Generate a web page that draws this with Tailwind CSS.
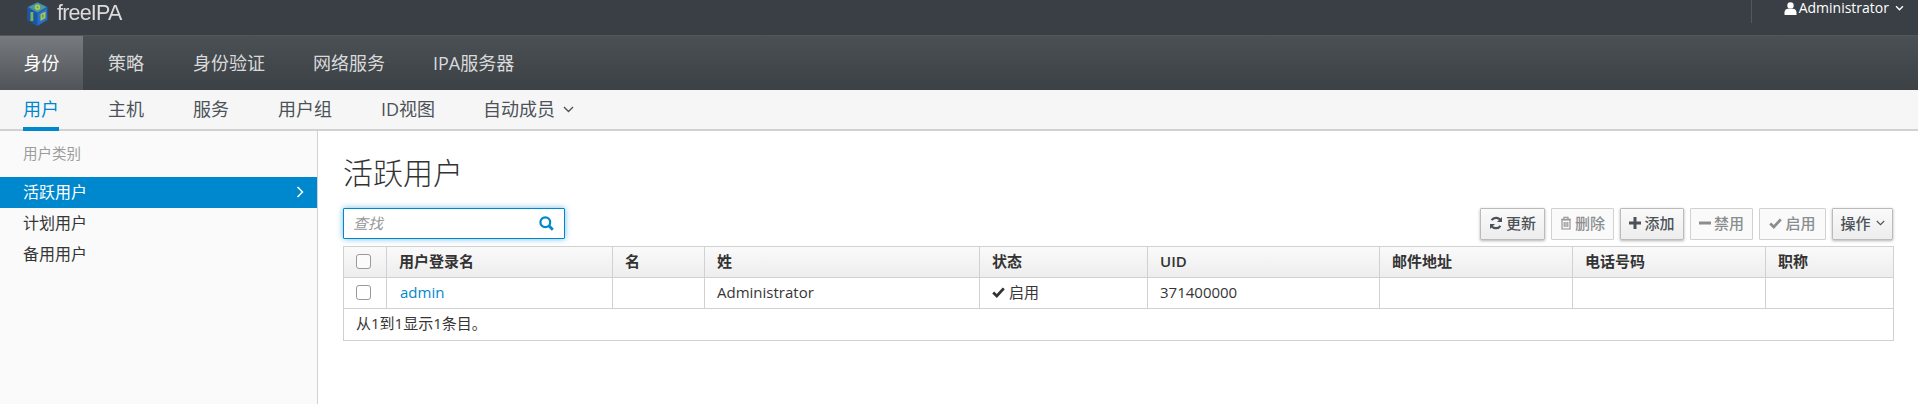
<!doctype html>
<html lang="zh"><head><meta charset="utf-8"><title>freeIPA</title>
<script src="https://cdn.jsdelivr.net/npm/@tailwindcss/browser@4"></script></head>
<body class="m-0 h-[404px] w-[1918px] overflow-hidden bg-white font-['Open_Sans','Noto_Sans_CJK_SC',sans-serif] text-[15px] text-[#363636]">
<header class="flex h-9 items-start justify-between bg-[#393f44] border-b border-[#52575b]">
  <div class="flex items-center pl-[27px] pt-[2px]">
    <svg class="blur-[0.4px]" width="21" height="24" viewBox="0 0 21 24"><polygon points="10.5,0 20.5,5 20.5,18 10.5,24 0.5,18 0.5,5" fill="#1f62b8"/><polygon points="10.5,0.500 19.500,5 10.500,10.500 1.500,5" fill="#4f9a96"/><circle cx="10.5" cy="5.200" r="2.700" fill="#b2cc4e"/><circle cx="10.500" cy="5.200" r="1" fill="#4f9a96"/><polygon points="1,6.500 10,11.500 10,23 1,18" fill="#1a56a6"/><polygon points="11,11.500 20,6.500 20,18 11,23" fill="#2a70c8"/><rect x="3.500" y="10" width="2.800" height="9" fill="#7fb356"/><polygon points="13.500,12 18.500,9.500 18.500,16 13.500,19" fill="#a8c64e"/><rect x="15" y="12.500" width="1.500" height="3" fill="#5f9a4a"/></svg>
    <span class="ml-[9px] -mt-[2px] font-['Liberation_Sans',sans-serif] text-[21.5px] leading-[24px] tracking-[-0.8px] text-[#dcdcdc] blur-[0.4px]">freeIPA</span>
  </div>
  <div class="flex h-[23px] items-start">
    <div class="h-[23px] w-px bg-[#53585c]"></div>
    <div class="ml-[32px] mr-[14px] flex items-center gap-[2px] text-[14px] leading-[16px] text-white">
      <svg width="13" height="13" viewBox="0 0 13 13" fill="#fff"><circle cx="6.500" cy="3.400" r="3.200"/><path d="M0.500 13v-2.600c0-2.200 1.600-3.700 3.400-3.700h5.200c1.800 0 3.400 1.500 3.400 3.700V13z"/></svg>
      <span>Administrator</span>
      <svg class="ml-[4px]" width="9" height="6" viewBox="0 0 10 7" fill="none" stroke="#fff" stroke-width="1.6"><path d="M1 1.500l4 4 4-4"/></svg>
    </div>
  </div>
</header>
<nav class="flex h-[54px] items-stretch bg-gradient-to-b from-[#4b5054] to-[#3c4145] text-[18px] text-[#d9dadb]">
  <a class="flex w-[83px] items-center justify-center bg-gradient-to-b from-[#777b80] to-[#505459] text-white">身份</a>
  <a class="ml-[25px] flex items-center">策略</a>
  <a class="ml-[49px] flex items-center">身份验证</a>
  <a class="ml-[48px] flex items-center">网络服务</a>
  <a class="ml-[48px] flex items-center">IPA服务器</a>
</nav>
<nav class="flex h-[41px] items-stretch border-b-2 border-[#d1d1d1] bg-[#f6f6f6] pl-[23px] text-[18px] text-[#4d5258]">
  <a class="-mb-[2px] flex items-center border-b-[4px] border-[#0088ce] pt-[2px] text-[#0088ce]">用户</a>
  <a class="ml-[49px] flex items-center">主机</a>
  <a class="ml-[49px] flex items-center">服务</a>
  <a class="ml-[49px] flex items-center">用户组</a>
  <a class="ml-[49px] flex items-center">ID视图</a>
  <a class="ml-[48px] flex items-center gap-2">自动成员
    <svg width="11" height="7" viewBox="0 0 11 7" fill="none" stroke="#4d5258" stroke-width="1.4"><path d="M1 1l4.500 4.500L10 1"/></svg></a>
</nav>
<div class="flex h-[273px]">
  <aside class="w-[318px] shrink-0 border-r border-[#d1d1d1] bg-[#fafafa]">
    <div class="h-[46px] pl-[23px] pt-[11px] text-[14.5px] leading-[24px] text-[#9c9c9c]">用户类别</div>
    <div class="flex h-[31px] items-center justify-between bg-[#0088ce] pb-[1px] pl-[23px] pr-[13px] text-[16px] text-white">活跃用户
      <svg width="8" height="12" viewBox="0 0 8 12" fill="none" stroke="#fff" stroke-width="1.5"><path d="M1.500 1l5 5-5 5"/></svg></div>
    <div class="flex h-[31px] items-center pb-[2px] pl-[23px] text-[16px]">计划用户</div>
    <div class="flex h-[31px] items-center pb-[2px] pl-[23px] text-[16px]">备用用户</div>
  </aside>
  <main class="w-[1600px] pl-[25px] pr-[25px]">
    <h1 class="h-[77px] pt-[18px] text-[30px] font-light leading-[48px] text-[#333]">活跃用户</h1>
    <div class="flex h-[38px] items-start justify-between">
      <div class="flex h-[31px] w-[222px] items-center justify-between rounded-[1px] border border-[#0088ce] bg-white pl-[9px] pr-[10px] shadow-[0_0_6px_rgba(0,136,206,0.55)]">
        <span class="text-[15px] italic text-[#999]">查找</span>
        <svg width="15" height="15" viewBox="0 0 15 15" fill="none" stroke="#0088ce" stroke-width="2.2"><circle cx="6.300" cy="6.300" r="4.900"/><path d="M9.800 9.800l4 4" stroke-width="2.800"/></svg>
      </div>
      <div class="flex gap-[6px] text-[15px] leading-[20px]">
        <button class="flex h-8 w-[65px] items-center justify-center gap-[3px] rounded-[1px] border border-[#bbb] bg-gradient-to-b from-[#fafafa] to-[#ededed] pb-[2px] font-medium text-[#4d5258] shadow-[0_1px_3px_rgba(0,0,0,0.3)]">
          <svg width="14" height="14" viewBox="0 0 14 14" fill="none" stroke="#4d5258" stroke-width="2.200"><path d="M12 5.200A5.300 5.300 0 0 0 2.600 4.200"/><path d="M2 8.800a5.300 5.300 0 0 0 9.400 1"/><path d="M13 1v5H8z" fill="#4d5258" stroke="none"/><path d="M1 13V8h5z" fill="#4d5258" stroke="none"/></svg>更新</button>
        <button class="flex h-8 w-[63px] items-center justify-center gap-[3px] rounded-[1px] border border-[#d1d1d1] bg-[#fafafa] pb-[2px] font-medium text-[#8b8d8f]">
          <svg width="12" height="14" viewBox="0 0 12 14" fill="none" stroke="#8b8d8f" stroke-width="1.100"><path d="M2 4h8v9H2z"/><path d="M1 3.200h10M4 3V1.200h4V3M4.200 6v5M6 6v5M7.800 6v5"/></svg>删除</button>
        <button class="flex h-8 w-[64px] items-center justify-center gap-[3px] rounded-[1px] border border-[#bbb] bg-gradient-to-b from-[#fafafa] to-[#ededed] pb-[2px] font-medium text-[#4d5258] shadow-[0_1px_3px_rgba(0,0,0,0.3)]">
          <svg width="12" height="12" viewBox="0 0 12 12" fill="#4d5258"><path d="M4.500 0h3v4.500H12v3H7.500V12h-3V7.500H0v-3h4.500z"/></svg>添加</button>
        <button class="flex h-8 w-[63px] items-center justify-center gap-[3px] rounded-[1px] border border-[#d1d1d1] bg-[#fafafa] pb-[2px] font-medium text-[#8b8d8f]">
          <svg width="12" height="12" viewBox="0 0 12 12" fill="#8b8d8f"><path d="M0 4.500h12v3H0z"/></svg>禁用</button>
        <button class="flex h-8 w-[67px] items-center justify-center gap-[3px] rounded-[1px] border border-[#d1d1d1] bg-[#fafafa] pb-[2px] font-medium text-[#8b8d8f]">
          <svg width="13" height="11" viewBox="0 0 13 11" fill="none" stroke="#8b8d8f" stroke-width="2.800"><path d="M1.200 5.600l3.600 3.400 7-7.600"/></svg>启用</button>
        <button class="flex h-8 w-[61px] items-center justify-center gap-[5px] rounded-[1px] border border-[#bbb] bg-gradient-to-b from-[#fafafa] to-[#ededed] pb-[2px] font-medium text-[#4d5258] shadow-[0_1px_3px_rgba(0,0,0,0.3)]">操作
          <svg width="9" height="6" viewBox="0 0 9 6" fill="none" stroke="#4d5258" stroke-width="1.100"><path d="M.8 1l3.700 3.700L8.200 1"/></svg></button>
      </div>
    </div>
    <table class="w-[1550px] table-fixed border-collapse border border-[#d1d1d1] text-[15px]">
      <colgroup><col class="w-[43px]"><col class="w-[226px]"><col class="w-[92px]"><col class="w-[275px]"><col class="w-[168px]"><col class="w-[232px]"><col class="w-[193px]"><col class="w-[193px]"><col class="w-[128px]"></colgroup>
      <thead><tr class="h-[31px] bg-gradient-to-b from-[#fafafa] to-[#ededed] text-left text-[#333]">
        <th class="border border-[#d1d1d1] p-0 pb-[1px]"><span class="ml-[12px] block h-[15px] w-[15px] rounded-[3px] border border-[#999] bg-white/60"></span></th>
        <th class="border border-[#d1d1d1] pb-[2px] pl-[12px] font-semibold">用户登录名</th>
        <th class="border border-[#d1d1d1] pb-[2px] pl-[12px] font-semibold">名</th>
        <th class="border border-[#d1d1d1] pb-[2px] pl-[12px] font-semibold">姓</th>
        <th class="border border-[#d1d1d1] pb-[2px] pl-[12px] font-semibold">状态</th>
        <th class="border border-[#d1d1d1] pb-[2px] pl-[12px] font-semibold">UID</th>
        <th class="border border-[#d1d1d1] pb-[2px] pl-[12px] font-semibold">邮件地址</th>
        <th class="border border-[#d1d1d1] pb-[2px] pl-[12px] font-semibold">电话号码</th>
        <th class="border border-[#d1d1d1] pb-[2px] pl-[12px] font-semibold">职称</th>
      </tr></thead>
      <tbody>
        <tr class="h-[31px]">
          <td class="border border-[#d1d1d1] p-0 pb-[1px]"><span class="ml-[12px] block h-[15px] w-[15px] rounded-[3px] border border-[#999]"></span></td>
          <td class="border border-[#d1d1d1] pb-[2px] pl-[13px] text-[#0088ce]">admin</td>
          <td class="border border-[#d1d1d1]"></td>
          <td class="border border-[#d1d1d1] pb-[2px] pl-[12px]">Administrator</td>
          <td class="border border-[#d1d1d1] pb-[2px] pl-[12px]"><span class="flex items-center gap-[4px]"><svg width="13" height="11" viewBox="0 0 13 11" fill="none" stroke="#333" stroke-width="2.800"><path d="M1.200 5.600l3.600 3.400 7-7.600"/></svg>启用</span></td>
          <td class="border border-[#d1d1d1] pb-[2px] pl-[12px]">371400000</td>
          <td class="border border-[#d1d1d1]"></td>
          <td class="border border-[#d1d1d1]"></td>
          <td class="border border-[#d1d1d1]"></td>
        </tr>
        <tr class="h-[32px]"><td colspan="9" class="border border-[#d1d1d1] pb-[2px] pl-[12px]">从1到1显示1条目。</td></tr>
      </tbody>
    </table>
  </main>
</div>
</body></html>
